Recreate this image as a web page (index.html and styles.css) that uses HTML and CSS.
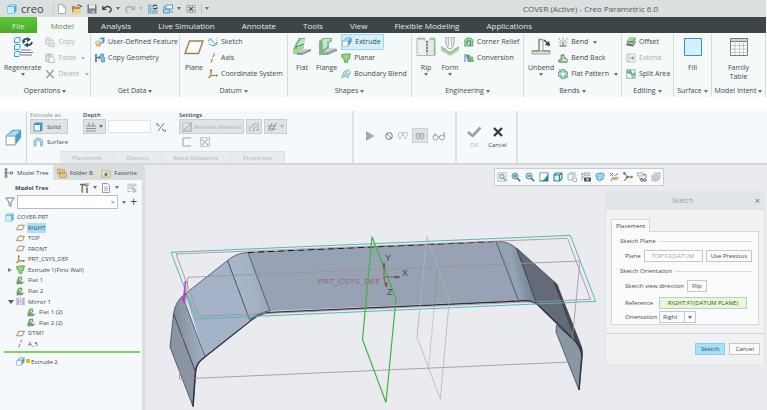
FILE: index.html
```html
<!DOCTYPE html>
<html lang="en">
<head>
    <meta charset="UTF-8">
    <meta name="viewport" content="width=device-width, initial-scale=1.0">
    <title>COVER (Active) - Creo Parametric 6.0</title>
    <link rel="stylesheet" href="styles.css">
</head>
<body>
    <!-- icon sprite -->
    <svg class="sprite" aria-hidden="true">
        <symbol id="i-cube" viewBox="0 0 10 10"><path d="M.5 2.500 2.500.5h7V7L7.500 9.500h-7z" fill="#4fb0d2"/><path d="M1 3h6v6H1z" fill="#c9f0ff"/><path d="M1.500 2.300 2.800 1h6L7.300 2.300z" fill="#a3e0f6"/></symbol>
        <symbol id="i-new" viewBox="0 0 10 10"><path d="M1.500.5h4.500l2.500 2.500v6.500h-7z" fill="#fff" stroke="#8a8f92" stroke-width=".7"/><path d="M6 .5V3h2.500" fill="none" stroke="#8a8f92" stroke-width=".7"/></symbol>
        <symbol id="i-open" viewBox="0 0 10 10"><path d="M0 2h3l1 1h4v6H0z" fill="#b98b3e"/><path d="m2 5h8L8 9.500H0z" fill="#f4cf83"/><path d="M5 1.500Q7.500-.5 9 2.500m-1.500-.4L9 3l.8-1.600" fill="none" stroke="#3f4a50" stroke-width=".9"/></symbol>
        <symbol id="i-save" viewBox="0 0 10 10"><path d="M.5.5h9v9h-9z" fill="#74797c"/><path d="M2 .5h6v4H2z" fill="#e7eaeb"/><path d="M2.500 6.500h5v3h-5z" fill="#b9bec0"/><path d="M3.300 7h1.200v2H3.300z" fill="#55595c"/></symbol>
        <symbol id="i-undo" viewBox="0 0 10 10"><path d="M1 5Q5 1 8 3.500T7 8.500M.8 2v3.300h3.400" fill="none" stroke="#40474b" stroke-width="1.300"/></symbol>
        <symbol id="i-redo" viewBox="0 0 10 10"><path d="M9 5Q5 1 2 3.500T3 8.500M9.200 2v3.300H5.800" fill="none" stroke="#a9afb1" stroke-width="1.300"/></symbol>
        <symbol id="i-regen" viewBox="0 0 10 10"><path d="M.5 1h2.500v2H.5zm0 3.200H3v2H.5zm0 3.200H3v2H.5z" fill="#d7f2fb" stroke="#3f9abb" stroke-width=".7"/><path d="M4.500 2.500Q7 0 9 2.200M9.500 3.500Q7 6 5 4" fill="none" stroke="#24506c" stroke-width="1.200"/><path d="M4 7h5.500M4 9h5.500" stroke="#5f93a8"/></symbol>
        <symbol id="i-windows" viewBox="0 0 10 10"><path d="M3 1h6.500v4H3z" fill="#f1fafc" stroke="#3f8aa5" stroke-width=".8"/><path d="M.5 5h6v4h-6z" fill="#9fe0f5" stroke="#3f8aa5" stroke-width=".8"/><path d="M0 3h2M8 8h2" stroke="#3f8aa5"/></symbol>
        <symbol id="i-closewin" viewBox="0 0 10 10"><path d="M1 1.500h8v7H1z" fill="none" stroke="#70777a" stroke-width=".8" stroke-dasharray="1.500 .8"/><path d="m3 3 4 4m0-4L3 7" stroke="#555c60" stroke-width="1.100"/></symbol>
        <symbol id="i-regen-lg" viewBox="0 0 20 20"><g fill="#e5f7fd" stroke="#3d9ac0"><path d="M1.500 1.500 3 .500h4v4L6 5.500H1.500zm0 7L3 7.500h4v4l-1 1H1.500zm0 7L3 14.500h4v4l-1 1H1.500z"/></g><path d="M10 4.500Q11 1 15 2M19 5Q18 9 13.500 8" fill="none" stroke="#234d68" stroke-width="1.700"/><path d="M14 0l4 2.500L14 5zM15 5.500 11 8l4 2.500zM9 3.500l1 3.500 3-3z" fill="#234d68"/><path d="M8 13h10M8 15.500h12M8 18h11" stroke="#777d80" stroke-width="1.200"/></symbol>
        <symbol id="i-copy" viewBox="0 0 10 10"><g fill="#eef1f2" stroke="#b3b8ba" stroke-width=".8"><path d="M.8.8h4l1.500 1.500v4.500H.8z"/><path d="M4 3.300h3.500L9.200 5v4.500H4z"/></g><path d="M5 6h3M5 7.500h3M2 3h2" stroke="#b3b8ba" stroke-width=".6"/></symbol>
        <symbol id="i-paste" viewBox="0 0 10 10"><path d="M.8 1.500h6.500v7H.8z" fill="#dcdfe0" stroke="#b3b8ba" stroke-width=".8"/><path d="M2.500.5h3v2h-3z" fill="#b3b8ba"/><path d="M4 3.800h3.500l1.700 1.500v4.200H4z" fill="#f6f8f9" stroke="#b3b8ba" stroke-width=".8"/></symbol>
        <symbol id="i-delete" viewBox="0 0 10 10"><path d="m1.500 1.500 7 7.500M8.500 1l-7 8" stroke="#979c9f" stroke-width="1.400"/></symbol>
        <symbol id="i-udf" viewBox="0 0 10 10"><path d="M1 5h5v4.500H1z" fill="#f0b65d"/><path d="m1 5 1.500-1.500h5L6 5z" fill="#ffe0a4"/><path d="M4 2 6 .5h3.500V5L8 6.500H4z" fill="#4b98b8"/><path d="M4 2h3.500v3.500H4z" fill="#c9edf9"/><circle cx="2.500" cy="6" r="2" fill="#fbe6bb" stroke="#ba8637" stroke-width=".6"/></symbol>
        <symbol id="i-copygeom" viewBox="0 0 10 10"><path d="M1 1v8" stroke="#385a75" stroke-width="1.400"/><path d="M2 4.500h2.500M3.500 3l2 1.500-2 1.500" stroke="#385a75" fill="none"/><path d="M5.500 1h3v2.500l1 1V9h-3z" fill="#74c8e5" stroke="#397b98" stroke-width=".6"/></symbol>
        <symbol id="i-plane-lg" viewBox="0 0 20 20"><path d="M5.500 4H19l-4.500 12.500H1z" fill="#fbfaf7" stroke="#a08050" stroke-width="1.400"/></symbol>
        <symbol id="i-plane" viewBox="0 0 10 10"><path d="M3 2.500h6.300L7 7.500H.7z" fill="#fffdfa" stroke="#9c7b50"/></symbol>
        <symbol id="i-sketch" viewBox="0 0 10 10"><path d="M1 1v8M9 1v8" stroke="#9bbac5" stroke-dasharray="1 1"/><path d="M.5 4q2-4 4 0t4.500 1.500Q9 8 6 8.500T2 7" fill="none" stroke="#45a4c7"/></symbol>
        <symbol id="i-axis" viewBox="0 0 10 10"><path d="M6.500.5 5 4M4.500 5.500 3 9.500" stroke="#a08050" stroke-width="1.100"/></symbol>
        <symbol id="i-csys" viewBox="0 0 10 10"><path d="M3 .5v6h6.500M3 6.500.5 9" fill="none" stroke="#a67c42" stroke-width="1.200"/><path d="m1.800 2 1.200-1.700L4.200 2zM8 5.300l1.800 1.200L8 7.700z" fill="#7e6037"/></symbol>
        <symbol id="i-flat-lg" viewBox="0 0 20 20"><path d="M3 8 7 1h6v5l-2 3v3L4 17H1v-4z" fill="#77b974"/><path d="M5 8 9 2h4v5l-2 2-6 3z" fill="#c2e6bb"/><path d="M1 13l11-4v2L4 17H1z" fill="#a0d69a"/><path d="m5 16 6-3 8-1v2l-9 4H5z" fill="#8e9497"/><path d="m5 15 6-3h8l-9 4z" fill="#c9cdcf"/><path d="m4 10 8-3" stroke="#3a7291"/></symbol>
        <symbol id="i-flange-lg" viewBox="0 0 20 20"><path d="M2 4 6 1h9v3l-3 2v7l-6 5H2z" fill="#7ebd7a"/><path d="M5 4.500 7 2h7l-2 3-1 6-6 3z" fill="#c5e8bd"/><path d="M5 5v9l6-4V4" fill="none" stroke="#4f9ab2"/><path d="m6 16 6-4h8v2l-9 4H6z" fill="#999fa2"/><path d="m6 15 6-4h8l-9 4z" fill="#cfd3d4"/></symbol>
        <symbol id="i-extrude" viewBox="0 0 10 10"><path d="m.5 4 4-3.500h5V5L6 9.500H.5z" fill="#4b9fc2"/><path d="m1 4 4-3h4L6 4z" fill="#a9dcee"/><path d="M.7 4.200H6v5.100H.7z" fill="#fff" stroke="#a9afb2" stroke-width=".6"/></symbol>
        <symbol id="i-planar" viewBox="0 0 10 10"><path d="m.7 1.500 8.600-.7-1 5.200-2 .5.500 2.700H3.500L3 5.500l-1.800-.8z" fill="#94d881" stroke="#478f45" stroke-width=".8"/></symbol>
        <symbol id="i-blend" viewBox="0 0 10 10"><path d="m.7 9 2-6L7 .7l2.400 2L7 9 4 7z" fill="#d8f1fa" stroke="#6aaac1" stroke-width=".8"/><path d="m4 7 2-5M2.500 4 8 5M2 6l6 1" stroke="#6aaac1" stroke-width=".6"/></symbol>
        <symbol id="i-rip-lg" viewBox="0 0 20 20"><path d="M1 2h8v1l2 2v13.500H1z" fill="#eef0f0" stroke="#a5aaac" stroke-width=".8"/><path d="M11 5l3-3h5v16.500h-8z" fill="#e6eaea" stroke="#a5aaac" stroke-width=".8"/><path d="M1 1.500h8M14 1.500h5M18.500 2v16" stroke="#8cc683" stroke-width="1.500"/><path d="M11 4v12" stroke="#2d6b87" stroke-width="1.300" stroke-dasharray="2 1"/></symbol>
        <symbol id="i-form-lg" viewBox="0 0 20 20"><path d="M6 0v6q1 6 4 6t4-6V0z" fill="#eff1f2" stroke="#9ca3a6"/><path d="M8.500 0v9M11.500 0v9" stroke="#bbc1c3"/><path d="m1 9 5 3q4 5 8 0l5-3v2.500l-5 3q-4 5-8 0l-5-3z" fill="#88c77c"/><path d="M1 12l5 3q4 5 8 0l5-3v1.500l-5 3q-4 4-8 0l-5-3z" fill="#b4babc"/></symbol>
        <symbol id="i-corner" viewBox="0 0 10 10"><path d="M.8 9V3l2-2h4l2 2v6z" fill="#9bd88a" stroke="#57955a" stroke-width=".8"/><path d="M3.300 7V4h3v4h-1.500" fill="#c8edf8" stroke="#2681a3"/></symbol>
        <symbol id="i-convert" viewBox="0 0 10 10"><path d="M0 1h4v2H2v6H0z" fill="#a0b8bf"/><path d="M2 2h4v3l2 4H4z" fill="#489abb"/><path d="m5 3 4 1 1 5H8L7 7 5 9z" fill="#7abb63"/></symbol>
        <symbol id="i-unbend-lg" viewBox="0 0 20 20"><path d="M8 2.500h4V14H8z" fill="#f4f6f6" stroke="#999e9f"/><path d="M1 14h18v3H1z" fill="#e3e6e7" stroke="#888d8e" stroke-width=".8"/><path d="M8 14V2.500h4M1 14h7M12 14h7" fill="none" stroke="#72aa67" stroke-width="1.300"/><path d="m13 3 5 4.500" stroke="#33393b" stroke-width="1.300"/><path d="m19 9-5-1 4-4z" fill="#33393b"/></symbol>
        <symbol id="i-bend" viewBox="0 0 10 10"><path d="M1 8.500h8M5 7V.5M4 6 .5 1M6 6l3.500-5M3 7 .5 5M7 7l2.500-2" stroke="#8b9b8f" stroke-width=".8"/><path d="M2 9.200h6M4 7h2" stroke="#64a55d" stroke-width="1.300"/></symbol>
        <symbol id="i-bendback" viewBox="0 0 10 10"><path d="M.7 9V7H3V2h3v3h2l1.300 1.500V9z" fill="#e9eeec" stroke="#687a70" stroke-width=".8"/><path d="M1 7h3V2h2M7 4v3M1 9h8" fill="none" stroke="#5ba353"/></symbol>
        <symbol id="i-flatpat" viewBox="0 0 10 10"><path d="M3 .8h4v2h2.300v4.500H7v2H3v-2H.7V2.800H3z" fill="#c4eaf7" stroke="#56a44c"/><path d="M3 3h4v4H3z" fill="#fff" stroke="#71b4cb" stroke-width=".7"/><path d="M1 1h1.500M8 8.500h1.500" stroke="#56a44c"/></symbol>
        <symbol id="i-offset" viewBox="0 0 10 10"><path d="m.5 6 2.500-3 6.500 1v2L7 9.500.5 8.500z" fill="#6b7275"/><path d="m.5 6 2.500-3 6.500 1L7 7.500z" fill="#c9ced0"/><path d="m1 4 2.500-3.500h6v2L7 6 1 5z" fill="#4c8d46"/><path d="m1 4 2.500-3.500h6L7 4.500z" fill="#9fdc8d"/></symbol>
        <symbol id="i-extend" viewBox="0 0 10 10"><path d="M1 1h8v8H1zM3 1v8" fill="#f3f5f5" stroke="#b4b9bb" stroke-width=".8"/><path d="M4 5h3M6 3.500 8 5 6 6.500z" stroke="#8b9193" stroke-width=".6" fill="#8b9193"/></symbol>
        <symbol id="i-split" viewBox="0 0 10 10"><path d="M.7.7h8.600v8.600H.7z" fill="#e9f5e7" stroke="#7a9fa3" stroke-width=".7"/><path d="M1 1h4l1 4-5-1zM6 5l3-2v6z" fill="#8ccb77"/><path d="M.7 3 9 6M4 .7l3 8.600" stroke="#518a9c" stroke-width=".8"/></symbol>
        <symbol id="i-fill-lg" viewBox="0 0 20 20"><path d="M1.500 1.500h17v17h-17z" fill="#d0f2fe" stroke="#3f91b3"/></symbol>
        <symbol id="i-table-lg" viewBox="0 0 20 20"><path d="M1.500 1.500h17v17h-17z" fill="#fff" stroke="#777c7e"/><path d="M1.500 1.500h17v3h-17z" fill="#d4d7d8" stroke="#777c7e"/><path d="M1.500 8.500h17M1.500 12h17M1.500 15.500h17M6 2v16M10.500 2v16M14.500 2v16" stroke="#b6bbbd" stroke-width=".8"/></symbol>

        <symbol id="i-solid" viewBox="0 0 10 10"><path d="M.5 2.500 2 .5h7.500V8L8 9.500H.5z" fill="#3c9cc0"/><path d="M1.500 3h5.500v5.500H1.500z" fill="#fff"/></symbol>
        <symbol id="i-sheet" viewBox="0 0 10 10"><path d="M1 9V4q3-5 7-2l1.500 2v5H7.500V5L6 3.500Q4 2 3 5v4z" fill="#a8dced" stroke="#579db5" stroke-width=".6"/></symbol>
        <symbol id="i-depth" viewBox="0 0 10 10"><path d="M0 4h10M0 6.500h10M0 9h10M3 .5V4M7 .5V4" stroke="#85898b" stroke-width=".9"/></symbol>
        <symbol id="i-flip" viewBox="0 0 10 10"><path d="m8 1-6 8" stroke="#777d80"/><path d="m.5 2 3 2M1 1v2M6 7l3 2.500M9.500 7.500v2" stroke="#777d80" stroke-width="1.200"/></symbol>
        <symbol id="i-cut" viewBox="0 0 10 10"><path d="M.7 9.200 9.300.8v8.400z" fill="#d5d8da" stroke="#969b9d" stroke-width=".8"/><path d="M9.300.8H.7v8.400" fill="none" stroke="#b3b8ba" stroke-width=".8"/></symbol>
        <symbol id="i-thick" viewBox="0 0 10 10"><path d="M.5 9V5h3l1-3h3M3 9h2V6l3-2M9 1v8M7 8h3" fill="none" stroke="#a2a7a9" stroke-width=".9"/></symbol>
        <symbol id="i-hatch" viewBox="0 0 10 10"><path d="m5 1-4 8M9.500.5l-5 9M.5 4h8M2 7h7" stroke="#8c9193"/></symbol>
        <symbol id="i-bracket" viewBox="0 0 10 10"><path d="M9 1H1v8h8" fill="none" stroke="#9ba0a2"/></symbol>
        <symbol id="i-boxflip" viewBox="0 0 10 10"><path d="M.7.7h8.600v8.600H.7z" fill="none" stroke="#a5aaac" stroke-width=".8"/><path d="m7.500 2-5 6M2 2.500l2 2M6 6l2 2" stroke="#85898b"/></symbol>
        <symbol id="i-play" viewBox="0 0 10 10"><path d="m1 0 8.500 5-8.500 5z" fill="#a6abad"/></symbol>
        <symbol id="i-none" viewBox="0 0 10 10"><circle cx="5" cy="5" r="3.200" fill="none" stroke="#82888a" stroke-width="1.100"/><path d="m3 3 4 4" stroke="#82888a"/></symbol>
        <symbol id="i-verify" viewBox="0 0 10 10"><path d="M.5 2 4 1v4L2 8 .5 5zM5.500 2 9 1v4L7 8 5.500 5zM4 3h2" fill="none" stroke="#a9aeb0" stroke-width=".9" stroke-dasharray="1.500 .6"/></symbol>
        <symbol id="i-attached" viewBox="0 0 10 10"><path d="M1.500 2.500h3v4l-1.500 2-2-1zM5.800 2.500h3v4l-1.500 2-2-1z" fill="#cdd1d3" stroke="#979c9e" stroke-width=".7"/></symbol>
        <symbol id="i-glasses" viewBox="0 0 14 10"><circle cx="3.500" cy="6.500" r="2.500" fill="none" stroke="#9da2a4"/><circle cx="10" cy="6.500" r="2.500" fill="none" stroke="#9da2a4"/><path d="M6 6h2M1 6l3-4M12.500 6V2H11" fill="none" stroke="#9da2a4"/></symbol>
        <symbol id="i-ok" viewBox="0 0 16 12"><path d="m2 6 4.500 4L14.500 1.500" fill="none" stroke="#9b9fa0" stroke-width="2.600"/></symbol>
        <symbol id="i-cancel" viewBox="0 0 12 12"><path d="m2 2 8 8m0-8-8 8" stroke="#353a3d" stroke-width="2.400"/></symbol>

        <symbol id="i-treetab" viewBox="0 0 10 10"><path d="M2 1v8M2 5h4" stroke="#777d80" stroke-width=".8"/><g fill="#fff" stroke="#5d6366"><circle cx="2" cy="1.600" r="1.100"/><circle cx="2" cy="5" r="1.100"/><circle cx="2" cy="8.400" r="1.100"/><circle cx="7.500" cy="5" r="1.300"/></g></symbol>
        <symbol id="i-folders" viewBox="0 0 10 10"><path d="M.5 1h3l1 1h3v3.500h-7zM2.500 4h2.500l1 1h3.500v4.500h-7z" fill="#eec67e" stroke="#b88c47" stroke-width=".7"/></symbol>
        <symbol id="i-fav" viewBox="0 0 10 10"><path d="M.7 2h3l1 1h4.600v6.300H.7z" fill="#f5deb0" stroke="#c9a160" stroke-width=".7"/><path d="m5 4 .7 1.500 1.600.2-1.200 1.100.3 1.700L5 7.700l-1.400.8.300-1.700-1.200-1.100 1.600-.2z" fill="#2a8fb7"/></symbol>
        <symbol id="i-tools" viewBox="0 0 10 10"><path d="M1 1.500h4.500l1 1.500M3.300 2v7.500" stroke="#686e71" stroke-width="1.500" fill="none"/><path d="M3.300 4.500v5" stroke="#ba8c48" stroke-width="1.800"/><path d="M8 4.500V10" stroke="#686e71" stroke-width="1.600"/><path d="M7 0v3h2V0" fill="none" stroke="#686e71" stroke-width=".9"/></symbol>
        <symbol id="i-list" viewBox="0 0 10 10"><path d="M1.500.5h5l2 2v7h-7z" fill="#fff" stroke="#7f8587" stroke-width=".8"/><path d="M3 4h4M3 5.700h4M3 7.400h4" stroke="#8fa3ab" stroke-width=".8"/></symbol>
        <symbol id="i-treeshow" viewBox="0 0 10 10"><path d="M1 0v8.500h3M1 2h3M1 5h3" fill="none" stroke="#b4b9bb" stroke-width=".8"/><path d="M3 1h6v2H3zM4 4h3v2H4z" fill="#d9ddde" stroke="#b4b9bb" stroke-width=".6"/><circle cx="7.500" cy="7.500" r="1.800" fill="#c8cccd" stroke="#a4a9ab" stroke-width=".6"/></symbol>
        <symbol id="i-funnel" viewBox="0 0 10 10"><path d="M.8 1h8.400L6 5v4.300L4 8V5z" fill="#fff" stroke="#666c6f" stroke-width=".9"/></symbol>
        <symbol id="i-flat" viewBox="0 0 10 10"><path d="M1 6 3 1h3.500v3L5 6l-2 3H1z" fill="#68aa60" stroke="#3e7e3e" stroke-width=".5"/><path d="M3 5l1-3h2L5 5z" fill="#bde6af"/><path d="m2.500 8.500 3-2h4L6 9.500z" fill="#858c8e"/></symbol>
        <symbol id="i-mirror" viewBox="0 0 10 10"><path d="M5 0v10" stroke="#86769f" stroke-width=".8" stroke-dasharray="1.500 1"/><path d="M1 1q3 4 0 8V1M9 1q-3 4 0 8V1M2.500 1q2 4 0 8M7.500 1q-2 4 0 8" fill="#ebe3f4" stroke="#a18bb9" stroke-width=".7"/></symbol>

        <symbol id="i-refit" viewBox="0 0 10 10"><path d="M.8.800h8.400v8.400H.8z" fill="none" stroke="#a9b1b4" stroke-width=".8"/><circle cx="4.800" cy="4.500" r="2.300" fill="#c7eaf6" stroke="#6d95a3"/><path d="m6.500 6.300 2.500 2.500" stroke="#6d95a3" stroke-width="1.200"/></symbol>
        <symbol id="i-zoomin" viewBox="0 0 10 10"><circle cx="4" cy="4" r="3" fill="#bdeafa" stroke="#4b93ad"/><path d="m6.200 6.200 3 3" stroke="#586266" stroke-width="1.500"/><path d="M2.500 4h3M4 2.500v3" stroke="#1f5e7a"/></symbol>
        <symbol id="i-zoomout" viewBox="0 0 10 10"><circle cx="4" cy="4" r="3" fill="#bdeafa" stroke="#4b93ad"/><path d="m6.200 6.200 3 3" stroke="#586266" stroke-width="1.500"/><path d="M2.500 4h3" stroke="#1f5e7a"/></symbol>
        <symbol id="i-repaint" viewBox="0 0 10 10"><path d="M.8.800h8.400v8.400H.8z" fill="#fff" stroke="#6fa5b8"/><path d="M9 1v8H1Q7 8 9 1z" fill="#2f7f9f"/></symbol>
        <symbol id="i-display" viewBox="0 0 10 10"><path d="M1 3h5.500v6H1zM1 3l2-2h6v5.500L6.500 9M6.500 3 9 1" fill="#d2f2fc" stroke="#31829f" stroke-width="1.100"/></symbol>
        <symbol id="i-saved" viewBox="0 0 10 10"><path d="M1 2h5v6H1zM2.500.8h5.500v5" fill="#eef7fa" stroke="#89aab6" stroke-width=".8"/><path d="M6 6h3.500v3.500H6z" fill="#fff" stroke="#89aab6" stroke-width=".7"/></symbol>
        <symbol id="i-viewmgr" viewBox="0 0 10 10"><path d="M1 .5v8M1 2h3M1 5h2" stroke="#8a9194" stroke-width=".8"/><path d="M3.500.8H9v3H3.500z" fill="#cfd5d7" stroke="#9aa0a2" stroke-width=".6"/><path d="M3 5.500h7v4H3z" fill="#4c5356"/><circle cx="6.500" cy="7.500" r="1.200" fill="#bcd1d9"/></symbol>
        <symbol id="i-persp" viewBox="0 0 10 10"><path d="m.8 2 5-1.200 3.600 1-1 5L4.500 9.200 1.500 7z" fill="#7cc5df" stroke="#519ab5" stroke-width=".7"/><path d="m1 2 4 1.500 4.200-1.600M5 3.500 4.500 9M1.500 5 5 6.300 9 4.500" fill="none" stroke="#d6f0f8" stroke-width=".7"/></symbol>
        <symbol id="i-datumdisp" viewBox="0 0 10 10"><path d="m1 1 3 3m0-3L1 4m4.500-.5L9 2M2 9l2-4M5 7h4M5 5v3" stroke="#8d7148" stroke-width=".9"/><path d="M6 5h3.500v1H6z" fill="#dc9b34"/></symbol>
        <symbol id="i-spin" viewBox="0 0 10 10"><path d="M1 1l3.500 4L1 9M4.500 5H9" fill="none" stroke="#658a58" stroke-width="1.100"/><circle cx="4.500" cy="5" r="1.300" fill="#cc4b40"/><circle cx="8.700" cy="5" r="1.200" fill="#47a14b"/><circle cx="1.300" cy="1.300" r="1.200" fill="#3b82a6"/></symbol>
        <symbol id="i-annot" viewBox="0 0 10 10"><path d="M.6 1h6v3h-6z" fill="#fff6d2" stroke="#8e8c7b" stroke-width=".7"/><path d="M6.600 2.500H9V6M2 6l3 1" stroke="#63686b" fill="none" stroke-width=".8"/><circle cx="5" cy="8" r="1.300" fill="none" stroke="#63686b"/><circle cx="8" cy="8" r="1.300" fill="none" stroke="#63686b"/></symbol>
        <symbol id="i-sim" viewBox="0 0 10 10"><path d="M1 3.500 4 1h5v5L6 9H1z" fill="#dde0e1" stroke="#a6abad" stroke-width=".8"/><circle cx="5" cy="5.500" r="2" fill="none" stroke="#a6abad"/></symbol>
    </svg>

    <header class="titlebar">
        <div class="brand"><svg class="ico"><use href="#i-cube"/></svg><span>creo</span></div>
        <div class="quick">
            <button aria-label="New"><svg class="ico"><use href="#i-new"/></svg></button>
            <button aria-label="Open"><svg class="ico"><use href="#i-open"/></svg></button>
            <button aria-label="Save"><svg class="ico"><use href="#i-save"/></svg></button>
            <button aria-label="Undo"><svg class="ico"><use href="#i-undo"/></svg><i class="caret"></i></button>
            <button aria-label="Redo" class="dim"><svg class="ico"><use href="#i-redo"/></svg><i class="caret"></i></button>
            <button aria-label="Regenerate model"><svg class="ico"><use href="#i-regen"/></svg></button>
            <button aria-label="Windows"><svg class="ico"><use href="#i-windows"/></svg><i class="caret"></i></button>
            <button aria-label="Close window"><svg class="ico"><use href="#i-closewin"/></svg></button>
            <button aria-label="Customize" class="more"><i class="caret"></i></button>
        </div>
        <h1>COVER (Active) - Creo Parametric 6.0</h1>
    </header>

    <nav class="tabs">
        <a href="#" class="file">File</a>
        <a href="#" class="active">Model</a>
        <a href="#">Analysis</a>
        <a href="#">Live Simulation</a>
        <a href="#">Annotate</a>
        <a href="#">Tools</a>
        <a href="#">View</a>
        <a href="#">Flexible Modeling</a>
        <a href="#">Applications</a>
    </nav>

    <section class="ribbon">
        <div class="group">
            <div class="tools">
                <button class="big"><svg><use href="#i-regen-lg"/></svg>Regenerate<i class="caret"></i></button>
                <div class="stack">
                    <button disabled><svg class="ico"><use href="#i-copy"/></svg>Copy</button>
                    <button disabled><svg class="ico"><use href="#i-paste"/></svg>Paste<i class="caret"></i></button>
                    <button disabled><svg class="ico"><use href="#i-delete"/></svg>Delete<i class="caret"></i></button>
                </div>
            </div>
            <button class="name">Operations<i class="caret"></i></button>
        </div>
        <div class="group">
            <div class="tools">
                <div class="stack">
                    <button><svg class="ico"><use href="#i-udf"/></svg>User-Defined Feature</button>
                    <button><svg class="ico"><use href="#i-copygeom"/></svg>Copy Geometry</button>
                </div>
            </div>
            <button class="name">Get Data<i class="caret"></i></button>
        </div>
        <div class="group">
            <div class="tools">
                <button class="big"><svg><use href="#i-plane-lg"/></svg>Plane</button>
                <div class="stack">
                    <button><svg class="ico"><use href="#i-sketch"/></svg>Sketch</button>
                    <button><svg class="ico"><use href="#i-axis"/></svg>Axis</button>
                    <button><svg class="ico"><use href="#i-csys"/></svg>Coordinate System</button>
                </div>
            </div>
            <button class="name">Datum<i class="caret"></i></button>
        </div>
        <div class="group">
            <div class="tools">
                <button class="big"><svg><use href="#i-flat-lg"/></svg>Flat</button>
                <button class="big"><svg><use href="#i-flange-lg"/></svg>Flange</button>
                <div class="stack">
                    <button class="on"><svg class="ico"><use href="#i-extrude"/></svg>Extrude</button>
                    <button><svg class="ico"><use href="#i-planar"/></svg>Planar</button>
                    <button><svg class="ico"><use href="#i-blend"/></svg>Boundary Blend</button>
                </div>
            </div>
            <button class="name">Shapes<i class="caret"></i></button>
        </div>
        <div class="group">
            <div class="tools">
                <button class="big"><svg><use href="#i-rip-lg"/></svg>Rip<i class="caret"></i></button>
                <button class="big"><svg><use href="#i-form-lg"/></svg>Form<i class="caret"></i></button>
                <div class="stack">
                    <button><svg class="ico"><use href="#i-corner"/></svg>Corner Relief</button>
                    <button><svg class="ico"><use href="#i-convert"/></svg>Conversion</button>
                </div>
            </div>
            <button class="name">Engineering<i class="caret"></i></button>
        </div>
        <div class="group">
            <div class="tools">
                <button class="big"><svg><use href="#i-unbend-lg"/></svg>Unbend<i class="caret"></i></button>
                <div class="stack">
                    <button><svg class="ico"><use href="#i-bend"/></svg>Bend<i class="caret"></i></button>
                    <button><svg class="ico"><use href="#i-bendback"/></svg>Bend Back</button>
                    <button><svg class="ico"><use href="#i-flatpat"/></svg>Flat Pattern<i class="caret"></i></button>
                </div>
            </div>
            <button class="name">Bends<i class="caret"></i></button>
        </div>
        <div class="group">
            <div class="tools">
                <div class="stack">
                    <button><svg class="ico"><use href="#i-offset"/></svg>Offset</button>
                    <button disabled><svg class="ico"><use href="#i-extend"/></svg>Extend</button>
                    <button><svg class="ico"><use href="#i-split"/></svg>Split Area</button>
                </div>
            </div>
            <button class="name">Editing<i class="caret"></i></button>
        </div>
        <div class="group">
            <div class="tools solo">
                <button class="big"><svg><use href="#i-fill-lg"/></svg>Fill</button>
            </div>
            <button class="name">Surface<i class="caret"></i></button>
        </div>
        <div class="group">
            <div class="tools solo">
                <button class="big"><svg><use href="#i-table-lg"/></svg>Family<br>Table</button>
            </div>
            <button class="name">Model Intent<i class="caret"></i></button>
        </div>
    </section>

    <section class="dash">
        <div class="dash-icon"><svg><use href="#i-extrude"/></svg></div>
        <div class="dash-main">
            <div class="options">
                <div class="option">
                    <h2 class="muted">Extrude as</h2>
                    <button class="pressed wide"><svg class="ico"><use href="#i-solid"/></svg>Solid</button>
                    <button class="plain"><svg class="ico"><use href="#i-sheet"/></svg>Surface</button>
                </div>
                <div class="option">
                    <h2>Depth</h2>
                    <div class="line">
                        <button class="pressed split" aria-label="Depth type"><svg class="ico"><use href="#i-depth"/></svg><i class="caret"></i></button>
                        <input type="text" class="depth" aria-label="Depth value">
                        <button class="plain" aria-label="Flip depth"><svg class="ico"><use href="#i-flip"/></svg></button>
                    </div>
                </div>
                <div class="option">
                    <h2>Settings</h2>
                    <div class="line">
                        <button class="pressed" disabled><svg class="ico"><use href="#i-cut"/></svg>Remove Material</button>
                        <button class="pressed" aria-label="Thicken" disabled><svg class="ico"><use href="#i-thick"/></svg></button>
                        <button class="pressed split" aria-label="Driving surface" disabled><svg class="ico"><use href="#i-hatch"/></svg><i class="caret"></i></button>
                    </div>
                    <div class="line">
                        <button class="plain" aria-label="Open side"><svg class="ico"><use href="#i-bracket"/></svg></button>
                        <button class="plain" aria-label="Flip material side"><svg class="ico"><use href="#i-boxflip"/></svg></button>
                    </div>
                </div>
            </div>
            <div class="subtabs">
                <button disabled>Placement</button>
                <button disabled>Options</button>
                <button disabled>Bend Allowance</button>
                <button disabled>Properties</button>
            </div>
        </div>
        <div class="dash-view">
            <button aria-label="Resume"><svg class="ico"><use href="#i-play"/></svg></button>
            <button aria-label="No preview"><svg class="ico"><use href="#i-none"/></svg></button>
            <button aria-label="Unattached preview"><svg class="ico"><use href="#i-verify"/></svg></button>
            <button aria-label="Attached preview" class="pressed"><svg class="ico"><use href="#i-attached"/></svg></button>
            <button aria-label="Verify"><svg class="glasses"><use href="#i-glasses"/></svg></button>
        </div>
        <div class="dash-end">
            <button disabled><svg><use href="#i-ok"/></svg>OK</button>
            <button><svg><use href="#i-cancel"/></svg>Cancel</button>
        </div>
    </section>

    <main class="work">
        <aside class="side">
            <div class="side-tabs">
                <button class="active"><svg class="ico"><use href="#i-treetab"/></svg>Model Tree</button>
                <button><svg class="ico"><use href="#i-folders"/></svg>Folder B</button>
                <button><svg class="ico"><use href="#i-fav"/></svg>Favorite</button>
            </div>
            <div class="side-head">
                <h2>Model Tree</h2>
                <button aria-label="Tree settings"><svg class="ico"><use href="#i-tools"/></svg><i class="caret"></i></button>
                <button aria-label="Tree display"><svg class="ico"><use href="#i-list"/></svg><i class="caret"></i></button>
                <button aria-label="Show tree"><svg class="ico"><use href="#i-treeshow"/></svg></button>
            </div>
            <div class="filter">
                <svg class="ico"><use href="#i-funnel"/></svg>
                <div class="search">
                    <input type="text" aria-label="Filter tree">
                    <button aria-label="Clear">×</button>
                </div>
                <button aria-label="Filter options"><i class="caret"></i></button>
                <button aria-label="Add filter" class="plus">+</button>
            </div>
            <ul class="tree">
                <li class="root"><svg class="ico"><use href="#i-cube"/></svg><span>COVER.PRT</span></li>
                <li><svg class="ico"><use href="#i-plane"/></svg><span class="sel">RIGHT</span></li>
                <li><svg class="ico"><use href="#i-plane"/></svg><span>TOP</span></li>
                <li><svg class="ico"><use href="#i-plane"/></svg><span>FRONT</span></li>
                <li><svg class="ico"><use href="#i-csys"/></svg><span>PRT_CSYS_DEF</span></li>
                <li class="parent"><button class="closed" aria-label="Expand"></button><svg class="ico"><use href="#i-planar"/></svg><span>Extrude 1(First Wall)</span></li>
                <li><svg class="ico"><use href="#i-flat"/></svg><span>Flat 1</span></li>
                <li><svg class="ico"><use href="#i-flat"/></svg><span>Flat 2</span></li>
                <li class="parent"><button class="opened" aria-label="Collapse"></button><svg class="ico"><use href="#i-mirror"/></svg><span>Mirror 1</span></li>
                <li class="child"><svg class="ico"><use href="#i-flat"/></svg><span>Flat 1 (2)</span></li>
                <li class="child"><svg class="ico"><use href="#i-flat"/></svg><span>Flat 2 (2)</span></li>
                <li><svg class="ico"><use href="#i-plane"/></svg><span>DTM1</span></li>
                <li><svg class="ico"><use href="#i-axis"/></svg><span>A_5</span></li>
            </ul>
            <div class="insert-line"></div>
            <div class="pending"><svg class="ico"><use href="#i-extrude"/></svg><i class="mark"></i><span>Extrude 2</span></div>
        </aside>

        <div class="canvas">
            <svg class="model" viewBox="145 165 622 245" preserveAspectRatio="xMinYMin meet" role="img" aria-label="Sheet metal cover">
                <defs>
                    <linearGradient id="bendL" x1="0" y1=".3" x2="1" y2="0"><stop offset="0" stop-color="#a9b8ca"/><stop offset=".5" stop-color="#a3b2c4"/><stop offset="1" stop-color="#8f9cad"/></linearGradient>
                    <linearGradient id="bendL2" x1="0" y1=".3" x2="1" y2=".1"><stop offset="0" stop-color="#7f8b9b"/><stop offset=".6" stop-color="#98a7b8"/><stop offset="1" stop-color="#a7b7ca"/></linearGradient>
                    <linearGradient id="bendR" x1="0" y1=".3" x2="1" y2="0"><stop offset="0" stop-color="#909cac"/><stop offset=".35" stop-color="#93a4b6"/><stop offset="1" stop-color="#59636f"/></linearGradient>
                </defs>
                <g stroke="#343a42" stroke-width=".7" stroke-linejoin="round">
                    <path d="M556.500 325 574 340q8 7 8 14l-3 36-23-58z" fill="#8896a6"/>
                    <path d="M248 252.500 496 241.500l22.500 59L270 311z" fill="#97a3b4" stroke="none"/>
                    <path d="M227.500 260.500Q236 253 248 252.500L270 311q-12 1-20.500 9z" fill="url(#bendL)"/>
                    <path d="M227.500 260.500 185 294l20 62.500 45-37z" fill="#a4b4c8" stroke="none"/>
                    <path d="M227.500 260.500 185 294M227.500 260.500l22 59" fill="none"/>
                    <path d="M186 293q-11 8-12.500 21l22 58q0-9 9.500-15.500L184 300z" fill="url(#bendL2)"/>
                    <path d="M173.500 314 170 347l23 59.500 2.500-34.500z" fill="#8995a4"/>
                    <path d="M496 241.500q12-1 20.500 7l20 54.500q-6-3.500-18-2.500z" fill="url(#bendR)"/>
                    <path d="M516.500 248 554 281.500l24 61-41.500-39.500z" fill="#626b77"/>
                    <path d="M554 281.500q4 2.500 5 8l22 56q2 4 1 11-1-6-5-13z" fill="#434b55"/>
                </g>
                <path d="M193 406.500l2.500-34q0-9 10-16l44-35q9-8 20.500-9L519 301q11-1 18 3l39 38q6 7 6 14l-3 34" fill="none" stroke="#2d343c" stroke-width="1.500" stroke-linejoin="round"/>
                <path d="M248 252.500 496 241.500" stroke="#6a727c" fill="none"/>
                <path d="M248 252.500 496 241.500" stroke="#15191d" stroke-dasharray="6 4" fill="none"/>
                <g fill="none" stroke="#a88c90" stroke-width=".8">
                    <path d="M176 254 567.500 238.300 590.500 299.300 199 316.300z"/>
                    <path d="M188 277.300 580 261 570 362 179.300 379z"/>
                    <path d="M438 264 428.500 370" stroke="#a07076" stroke-dasharray="1 1.500"/>
                </g>
                <path d="M171 252.300 570.300 235.300 595.700 301.300 196.300 319z" fill="none" stroke="#50b9bb"/>
                <path d="M427 236.700 449.300 300 440.300 399 417 337z" fill="none" stroke="#b0b5bc" stroke-width=".8"/>
                <path d="M372 236.700 396 298.700 386 402.500 362.500 339.500z" fill="none" stroke="#3db53e" stroke-width="1.200"/>
                <g fill="none" stroke="#7b4c50" stroke-width=".8">
                    <path d="M384 279v-16M384 277h15M384 278l2 9"/>
                    <path d="m383 267 1-4 1 4zM395 276l5 1-5 1zM385 283l1.500 4 .5-4z" fill="#7b4c50"/>
                </g>
                <path d="M185.500 281 183.500 300" stroke="#c03adf" stroke-width="1.600"/>
                <path d="M181 297.500h5l-2.500 5.500z" fill="#c03adf"/>
                <g class="axis-name">
                    <text x="385" y="261">Y</text>
                    <text x="402" y="276">X</text>
                    <text x="387" y="295">Z</text>
                </g>
                <text class="csys-name" x="318" y="284">PRT_CSYS_DEF</text>
            </svg>

            <div class="viewbar">
                <button aria-label="Refit"><svg class="ico"><use href="#i-refit"/></svg></button>
                <button aria-label="Zoom in"><svg class="ico"><use href="#i-zoomin"/></svg></button>
                <button aria-label="Zoom out"><svg class="ico"><use href="#i-zoomout"/></svg></button>
                <button aria-label="Repaint"><svg class="ico"><use href="#i-repaint"/></svg></button>
                <button aria-label="Display style"><svg class="ico"><use href="#i-display"/></svg></button>
                <button aria-label="Saved orientations"><svg class="ico"><use href="#i-saved"/></svg></button>
                <button aria-label="View manager"><svg class="ico"><use href="#i-viewmgr"/></svg></button>
                <button aria-label="Perspective"><svg class="ico"><use href="#i-persp"/></svg></button>
                <button aria-label="Datum display"><svg class="ico"><use href="#i-datumdisp"/></svg></button>
                <button aria-label="Spin center"><svg class="ico"><use href="#i-spin"/></svg></button>
                <button aria-label="Annotation display"><svg class="ico"><use href="#i-annot"/></svg></button>
                <button aria-label="Simulation"><svg class="ico"><use href="#i-sim"/></svg></button>
            </div>

            <form class="dialog">
                <div class="dialog-title"><h2>Sketch</h2><button type="button" aria-label="Close">×</button></div>
                <div class="dialog-body">
                    <button type="button" class="dialog-tab">Placement</button>
                    <div class="panel">
                        <h3>Sketch Plane</h3>
                        <div class="field">
                            <label for="plane">Plane</label>
                            <input type="text" id="plane" value="TOP:F2(DATUM" readonly>
                            <button type="button">Use Previous</button>
                        </div>
                        <h3>Sketch Orientation</h3>
                        <div class="field">
                            <span>Sketch view direction</span>
                            <button type="button">Flip</button>
                        </div>
                        <div class="field ref">
                            <label for="reference">Reference</label>
                            <input type="text" id="reference" value="RIGHT:F1(DATUM PLANE)" readonly>
                        </div>
                        <div class="field ref">
                            <label for="orientation">Orientation</label>
                            <span class="pick">
                                <select id="orientation">
                                    <option>Right</option>
                                </select>
                                <i class="caret"></i>
                            </span>
                        </div>
                    </div>
                </div>
                <div class="dialog-foot">
                    <button type="button" class="primary">Sketch</button>
                    <button type="button">Cancel</button>
                </div>
            </form>
        </div>
    </main>
</body>
</html>
```

FILE: styles.css
```css
* {
    box-sizing: border-box;
}

body {
    margin: 0;
    min-height: 100vh;
    display: flex;
    flex-direction: column;
    font-family: "Open Sans", "Noto Sans", sans-serif;
    font-size: 7px;
    line-height: 10px;
    color: #43494c;
    background: #fff;
}

h1, h2, h3, ul {
    margin: 0;
    padding: 0;
    font-size: inherit;
    font-weight: 400;
}

button, input, select {
    margin: 0;
    padding: 0;
    border: 0;
    border-radius: 0;
    font: inherit;
    color: inherit;
    background: none;
}

button {
    display: flex;
    align-items: center;
    white-space: nowrap;
}

button:disabled {
    color: #b0b4b6;
}

svg {
    display: block;
    flex: none;
}

.sprite {
    position: absolute;
    width: 0;
    height: 0;
}

.ico {
    width: 10px;
    height: 10px;
}

.caret {
    border: 2px solid transparent;
    border-top: 3px solid #6a7073;
    border-bottom: 0;
    flex: none;
}

.dim .caret, :disabled .caret {
    border-top-color: #b0b4b6;
}

/* title bar */
.titlebar {
    display: flex;
    align-items: center;
    height: 17px;
    background: #dadfe0;
    margin-right: 1px;
}

.brand {
    display: flex;
    align-items: center;
    gap: 4px;
    width: 54px;
    padding-left: 7px;
    font-size: 11px;
    color: #3d4547;
    border-right: 1px solid #c6cbcc;
}

.quick {
    display: flex;
    gap: 5px;
    width: 155px;
    padding-left: 3px;
}

.quick button {
    gap: 4px;
}

.quick .more {
    padding-left: 3px;
    border-left: 1px solid #bcc1c2;
}

.titlebar h1 {
    flex: 1;
    padding-left: 314px;
    font-size: 8px;
    color: #555b5e;
    white-space: nowrap;
}

/* tabs */
.tabs {
    display: flex;
    height: 16px;
    background: #3d4547;
    margin-right: 1px;
}

.tabs a {
    padding: 0 14px 0 13px;
    font-size: 8px;
    line-height: 17px;
    color: #e4e8e9;
    text-decoration: none;
    white-space: nowrap;
}

.tabs .file {
    padding: 0 12px;
    background: linear-gradient(#5fc437, #49ad2b);
}

.tabs .active {
    padding: 0 14px;
    color: #4c9b35;
    background: #f5f9fa;
}

/* ribbon */
.ribbon {
    display: grid;
    grid-template-columns: 91fr 89fr 108fr 124fr 112fr 98fr 52fr 38fr 54fr;
    margin: 0 1px 14px 0;
    padding-top: 1px;
    background: #f5f9fa;
}

.group {
    display: flex;
    flex-direction: column;
    min-width: 0;
    border-right: 1px solid #d5dadc;
}

.tools {
    display: flex;
    gap: 4px;
    height: 49px;
    padding-left: 4px;
}

.tools.solo {
    justify-content: center;
    padding: 0;
}

.big {
    flex-direction: column;
    min-width: 20px;
    padding-top: 3px;
    line-height: 9px;
    text-align: center;
}

.big svg {
    width: 20px;
    height: 20px;
    margin-bottom: 6px;
}

.big .caret {
    margin-top: 1px;
}

.stack button {
    gap: 3px;
    height: 16px;
}

.stack .caret {
    margin-left: 2px;
}

.stack .on {
    padding-right: 2px;
    background: #d3f0fc;
    border: 1px solid #9bd7ee;
}

.name {
    justify-content: center;
    gap: 2px;
    height: 14px;
    padding-top: 2px;
}

/* dashboard */
.dash {
    display: flex;
    height: 54px;
    font-size: 6px;
    line-height: 8px;
    background: #f5f9fb;
    border-bottom: 2px solid #d3d8db;
}

.dash-icon {
    display: flex;
    align-items: center;
    width: 27px;
    padding-left: 5px;
    border-right: 1px solid #d0d5d8;
}

.dash-icon svg {
    width: 17px;
    height: 17px;
}

.dash-main {
    display: flex;
    flex-direction: column;
    justify-content: space-between;
    width: 327px;
    border-right: 2px solid #dde1e4;
}

.options {
    display: grid;
    grid-template-columns: 53px 96px auto;
    padding-left: 3px;
}

.option h2 {
    font-weight: 600;
}

.option .muted {
    color: #a3a8aa;
}

.line {
    display: flex;
    align-items: center;
    gap: 2px;
}

.pressed {
    gap: 2px;
    height: 15px;
    padding: 0 2px;
    background: #dfe3e5;
    border: 1px solid #c9ced0;
}

.pressed.wide {
    width: 38px;
    gap: 4px;
}

.split {
    gap: 3px;
}

.plain {
    gap: 4px;
    height: 15px;
    padding: 0 3px;
}

.depth {
    width: 43px;
    height: 13px;
    background: #fff;
    border: 1px solid #dfe3e5;
}

.subtabs {
    display: flex;
    margin-left: 33px;
}

.subtabs button {
    height: 12px;
    padding: 0 12px;
    background: #e9ecee;
    border: 1px solid #dce0e2;
    border-bottom: 0;
    border-left-width: 0;
}

.dash-view {
    display: flex;
    align-items: center;
    gap: 4px;
    width: 103px;
    padding: 0 0 3px 11px;
    border-right: 2px solid #dde1e4;
}

.dash-view button:first-child {
    margin-right: 5px;
}

.dash-view .glasses {
    width: 14px;
    height: 10px;
}

.dash-end {
    display: flex;
    align-items: center;
    justify-content: center;
    gap: 6px;
    width: 61px;
    border-right: 2px solid #dde1e4;
}

.dash-end button {
    flex-direction: column;
    gap: 3px;
}

.dash-end svg {
    width: 16px;
    height: 12px;
}

/* model tree */
.work {
    display: flex;
    flex: 1;
    font-size: 6px;
    line-height: 8px;
}

.side {
    flex: none;
    width: 145px;
    background: #f5f9fb;
    border-right: 3px solid #dadee1;
}

.side-tabs {
    display: flex;
    height: 15px;
    background: #d8dddf;
}

.side-tabs button {
    gap: 3px;
    width: 45px;
    padding-left: 4px;
    overflow: hidden;
}

.side-tabs .active {
    width: 53px;
    background: #f5f9fb;
}

.side-head {
    display: flex;
    align-items: center;
    gap: 4px;
    height: 15px;
    padding-left: 15px;
}

.side-head h2 {
    flex: 1;
    font-weight: 700;
}

.side-head button {
    gap: 4px;
}

.side-head button:last-child {
    padding: 0 5px 0 4px;
}

.filter {
    display: flex;
    align-items: center;
    gap: 4px;
    padding: 0 5px 3px 5px;
}

.search {
    display: flex;
    flex: 1;
    min-width: 0;
    height: 14px;
    margin-left: -2px;
    background: #fff;
    border: 1px solid #b9bec0;
}

.search input {
    flex: 1;
    min-width: 0;
}

.search button {
    padding-right: 2px;
    font-size: 8px;
    color: #8c9294;
}

.plus {
    font-size: 12px;
}

.tree {
    display: grid;
    grid-auto-rows: 1fr;
    height: 137px;
    list-style: none;
}

.tree li, .pending {
    display: flex;
    align-items: center;
    gap: 2px;
    padding-left: 16px;
    white-space: nowrap;
}

.tree .ico, .pending .ico {
    width: 9px;
    height: 9px;
}

.tree .root {
    padding-left: 5px;
}

.tree .parent {
    padding-left: 8px;
}

.tree .child {
    padding-left: 27px;
}

.tree span {
    padding: 0 1px;
}

.tree .sel {
    padding: 1px;
    background: #a8e0fa;
}

.closed, .opened {
    border: 2px solid transparent;
}

.closed {
    width: 6px;
    border-width: 2px 0 2px 4px;
    border-left-color: #777d80;
}

.opened {
    width: 6px;
    border-width: 4px 3px 0 3px;
    border-top-color: #555b5e;
}

.insert-line {
    height: 2px;
    margin: 2px 2px 4px 4px;
    background: #7ed45f;
}

.pending {
    gap: 1px;
}

.pending .mark {
    width: 4px;
    height: 4px;
    margin-bottom: 2px;
    background: #e4bc1f;
}

/* graphics area */
.canvas {
    position: relative;
    flex: 1;
    min-width: 0;
    background: #e9ebef;
}

.model {
    width: 100%;
}

.axis-name {
    font: 9px "Liberation Sans", sans-serif;
    fill: #4d4a50;
}

.csys-name {
    font: 8px "Liberation Sans", sans-serif;
    fill: #93696f;
}

.viewbar {
    position: absolute;
    top: 3px;
    right: 103px;
    display: flex;
    gap: 4px;
    padding: 3px 2px;
    background: #f8fafb;
    border: 1px solid #c8cdd0;
}

/* sketch dialog */
.dialog {
    position: absolute;
    top: 26px;
    right: 2px;
    width: 160px;
    background: #eff1f3;
    border: 1px solid #e2e5e8;
}

.dialog-title {
    display: flex;
    align-items: center;
    height: 18px;
    padding: 0 4px;
    background: #e2e5e8;
    color: #9a9fa2;
}

.dialog-title h2 {
    flex: 1;
    font-size: 7px;
    text-align: center;
}

.dialog-title button {
    font-size: 9px;
    color: #6d7376;
}

.dialog-body {
    padding: 9px 5px 8px;
}

.dialog-tab {
    position: relative;
    height: 13px;
    margin-bottom: -1px;
    padding: 0 4px;
    background: #fafbfc;
    border: 1px solid #d2d6d9;
    border-bottom: 0;
}

.panel {
    display: flex;
    flex-direction: column;
    padding: 4px 6px 0 8px;
    background: #fafbfc;
    border: 1px solid #d2d6d9;
}

.panel h3 {
    display: flex;
    align-items: center;
    gap: 3px;
    height: 10px;
}

.panel h3::after {
    content: "";
    flex: 1;
    height: 1px;
    background: #d8dcde;
}

.field {
    display: flex;
    align-items: center;
    gap: 3px;
    height: 20px;
    padding-left: 5px;
    white-space: nowrap;
}

.field button, .dialog-foot button {
    height: 12px;
    padding: 0 4px;
    background: #f9fafb;
    border: 1px solid #c3c8cb;
}

.field input {
    flex: 1;
    min-width: 0;
    height: 12px;
    background: #fff;
    border: 1px solid #c3c8cb;
}

#plane {
    padding-left: 7px;
    color: #999ea1;
}

#reference {
    text-align: center;
    background: #e6fbd3;
}

.ref {
    height: 14px;
    padding-right: 5px;
}

.ref label {
    width: 31px;
}

.pick {
    display: flex;
    align-items: center;
    width: 37px;
    height: 12px;
    padding-right: 3px;
    border: 1px solid #c3c8cb;
}

.pick select {
    flex: 1;
    height: 10px;
    margin-right: 3px;
    padding-left: 3px;
    appearance: none;
    border-right: 1px solid #c3c8cb;
}

.dialog-foot {
    display: flex;
    justify-content: flex-end;
    gap: 4px;
    padding: 9px 4px;
    border-top: 1px solid #d2d6d9;
}

.dialog-foot button {
    padding: 0 5px;
}

.dialog-foot .primary {
    background: #a2e0fb;
    border-color: #8ecde9;
}
```
